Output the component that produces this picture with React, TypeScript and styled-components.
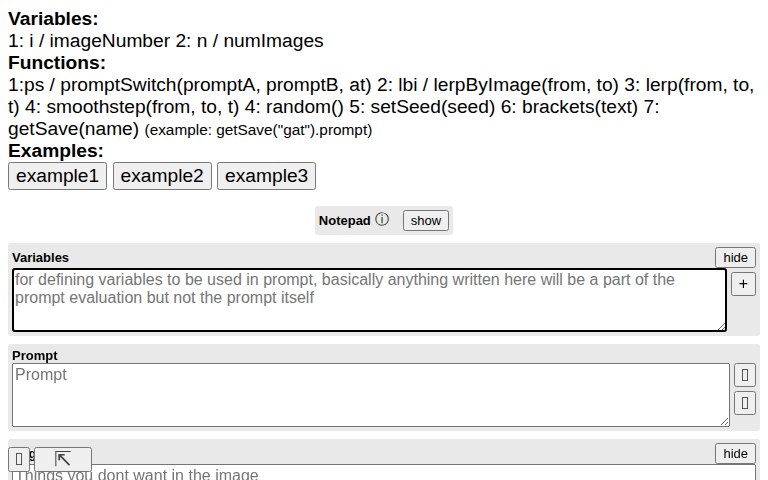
import React from 'react'
import styled, { createGlobalStyle } from 'styled-components'

const GlobalStyle = createGlobalStyle`
  html {
    overflow: hidden;
    height: 100%;
  }
  body {
    margin: 8px;
    font-family: "Liberation Sans", Arial, sans-serif;
  }
`

const Help = styled.div`
  font-size: 19.2px;
  color: #000;
`

const Heading = styled.div`
  font-weight: 700;
`

const Small = styled.span`
  font-size: 15.36px;
`

const ExampleButton = styled.button`
  font-family: inherit;
  font-size: 19.2px;
`

const NotepadRow = styled.div`
  display: flex;
  justify-content: center;
  margin-top: 16px;
`

const NotepadBox = styled.div`
  display: flex;
  align-items: center;
  padding: 4px;
  background: #e9e9e9;
  border-radius: 3px;
`

const InfoMark = styled.span`
  font-family: "DejaVu Sans", sans-serif;
  font-size: 14px;
  line-height: 15px;
  color: #000;
  margin-left: 4px;
  margin-right: 14px;
  margin-top: -3px;
`

const SmallButton = styled.button`
  font-family: inherit;
  font-size: 13px;
`

const Panel = styled.section`
  margin-top: 8px;
  padding: 4px;
  background: #e9e9e9;
  border-radius: 3px;
`

const PanelHeader = styled.div`
  display: flex;
  align-items: center;
  justify-content: space-between;
`

const Label = styled.label`
  font-size: 13px;
  font-weight: 700;
  line-height: 15px;
`

const PanelBody = styled.div`
  display: flex;
  align-items: flex-start;
  gap: 4px;
`

const Field = styled.textarea`
  display: block;
  flex: 1;
  min-width: 0;
  height: 64px;
  box-sizing: border-box;
  font-family: inherit;
  font-size: 16px;
  &:focus {
    outline: 2px solid #000;
    outline-offset: -2px;
    border-radius: 3px;
  }
`

const SideButtons = styled.div<{ $top?: number }>`
  display: flex;
  flex-direction: column;
  gap: 4px;
  margin-top: ${({ $top }) => $top ?? 0}px;
`

const SideButton = styled.button<{ $wide?: boolean }>`
  display: flex;
  align-items: center;
  justify-content: center;
  width: ${({ $wide }) => ($wide ? 25 : 22)}px;
  height: 24px;
  padding: 0;
  font-family: inherit;
  font-size: 16px;
`

// the emoji have no font in the reference, they show as an empty box
const MissingGlyph = styled.span`
  display: block;
  width: 4px;
  height: 10px;
  border: 1px solid #555;
`

const FloatingBar = styled.div`
  position: fixed;
  left: 8px;
  bottom: 8px;
  display: flex;
  gap: 4px;
`

const FloatingButton = styled.button<{ $width: number }>`
  display: flex;
  align-items: center;
  justify-content: center;
  width: ${({ $width }) => $width}px;
  height: 25px;
  padding: 0 0 2px;
  font-family: "DejaVu Sans", sans-serif;
  font-size: 21px;
  font-weight: 400;
  color: #444;
`

export default function App() {
  return (
    <>
      <GlobalStyle />
      <Help>
        <Heading>Variables:</Heading>
        1: i / imageNumber 2: n / numImages
        <Heading>Functions:</Heading>
        1:ps / promptSwitch(promptA, promptB, at) 2: lbi / lerpByImage(from, to) 3: lerp(from, to, t) 4:
        smoothstep(from, to, t) 4: random() 5: setSeed(seed) 6: brackets(text) 7: getSave(name){' '}
        <Small>(example: getSave("gat").prompt)</Small>
        <Heading>Examples:</Heading>
        <ExampleButton>example1</ExampleButton> <ExampleButton>example2</ExampleButton>{' '}
        <ExampleButton>example3</ExampleButton>
      </Help>

      <NotepadRow>
        <NotepadBox>
          <Label>Notepad</Label>
          <InfoMark>ⓘ</InfoMark>
          <SmallButton>show</SmallButton>
        </NotepadBox>
      </NotepadRow>

      <Panel>
        <PanelHeader>
          <Label>Variables</Label>
          <SmallButton>hide</SmallButton>
        </PanelHeader>
        <PanelBody>
          <Field
            autoFocus
            placeholder="for defining variables to be used in prompt, basically anything written here will be a part of the prompt evaluation but not the prompt itself"
          />
          <SideButtons $top={4}>
            <SideButton $wide>+</SideButton>
          </SideButtons>
        </PanelBody>
      </Panel>

      <Panel>
        <PanelHeader>
          <Label>Prompt</Label>
        </PanelHeader>
        <PanelBody>
          <Field placeholder="Prompt" />
          <SideButtons>
            <SideButton>
              <MissingGlyph />
            </SideButton>
            <SideButton>
              <MissingGlyph />
            </SideButton>
          </SideButtons>
        </PanelBody>
      </Panel>

      <Panel>
        <PanelHeader>
          <Label>Negative</Label>
          <SmallButton>hide</SmallButton>
        </PanelHeader>
        <PanelBody>
          <Field placeholder="Things you dont want in the image" />
        </PanelBody>
      </Panel>

      <FloatingBar>
        <FloatingButton $width={22}>
          <MissingGlyph />
        </FloatingButton>
        <FloatingButton $width={58}>⇱</FloatingButton>
      </FloatingBar>
    </>
  )
}
